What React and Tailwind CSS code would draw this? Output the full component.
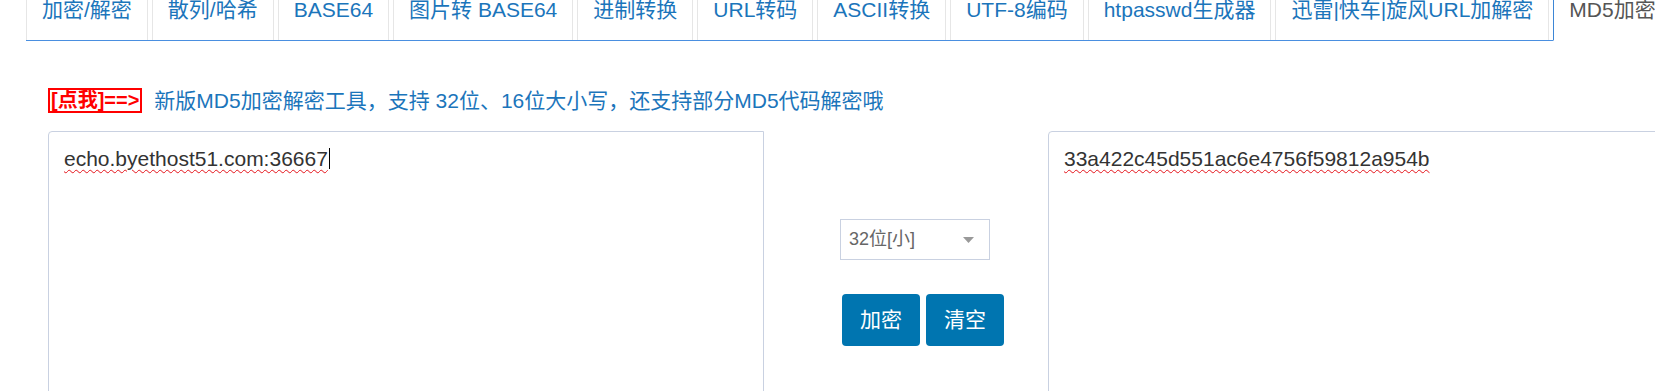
import React from "react";

const tabs = [
  "加密/解密",
  "散列/哈希",
  "BASE64",
  "图片转 BASE64",
  "进制转换",
  "URL转码",
  "ASCII转换",
  "UTF-8编码",
  "htpasswd生成器",
  "迅雷|快车|旋风URL加解密",
];

const Tab = ({ label }) => (
  <li className="mr-[4px] shrink-0">
    <span className="block border border-b-0 border-[#e6e6e6] px-[15px] py-[15px] leading-[30px] text-[#1b75bb]">{label}</span>
  </li>
);

const Box = ({ text, caret = false }) => (
  <div className="h-[300px] shrink-0 rounded-tl-[4px] border border-[#c9d1e1] bg-white px-[15px] py-[12px] text-[21px] leading-[30px] text-[#333]">
    <span className="underline decoration-wavy decoration-[#e5141b] decoration-1 underline-offset-[3px]">{text}</span>
    {caret && <span className="ml-px inline-block h-[21px] w-px bg-black align-[-3px]" />}
  </div>
);

export default function App() {
  return (
    <div className="h-[391px] w-[1655px] overflow-hidden bg-white font-['Liberation_Sans','Noto_Sans_CJK_SC',sans-serif] text-[21px]">
      {/* tabs, page is scrolled so top is cut */}
      <ul className="-mt-[21px] ml-[26px] flex whitespace-nowrap border-b border-[#4a8fe0]">
        {tabs.map((t) => (
          <Tab key={t} label={t} />
        ))}
        <li className="-mb-px shrink-0">
          <span className="block border border-[#3d86d6] border-b-white bg-white px-[15px] py-[15px] pr-[60px] leading-[30px] text-[#555]">MD5加密</span>
        </li>
      </ul>

      <div className="pl-[48px]">
        {/* notice */}
        <div className="mt-[47px] flex items-center">
          <span className="border-2 border-[#ff0000] px-[1px] text-[20px] font-bold leading-[21px] text-[#ff0000]">[点我]==&gt;</span>
          <span className="ml-[12px] leading-[25px] text-[#1b75bb]">新版MD5加密解密工具，支持 32位、16位大小写，还支持部分MD5代码解密哦</span>
        </div>

        {/* editor row */}
        <div className="mt-[18px] flex">
          <div className="w-[716px] shrink-0">
            <Box text="echo.byethost51.com:36667" caret />
          </div>

          <div className="w-[284px] shrink-0 pl-[76px] pt-[88px]">
            <div className="flex h-[41px] w-[150px] items-center justify-between border border-[#c9d1e1] bg-white pl-[8px] pr-[15px] text-[18px] text-[#666]">
              <span>32位[小]</span>
              <svg width="11" height="6" viewBox="0 0 11 6">
                <path d="M0 0h11L5.5 6z" fill="#999" />
              </svg>
            </div>
            <div className="ml-[2px] mt-[34px] flex gap-[6px]">
              <button className="h-[52px] w-[78px] rounded-[4px] bg-[#0075b0] text-[21px] text-white">加密</button>
              <button className="h-[52px] w-[78px] rounded-[4px] bg-[#0075b0] text-[21px] text-white">清空</button>
            </div>
          </div>

          <div className="w-[716px] shrink-0">
            <Box text="33a422c45d551ac6e4756f59812a954b" />
          </div>
        </div>
      </div>
    </div>
  );
}
